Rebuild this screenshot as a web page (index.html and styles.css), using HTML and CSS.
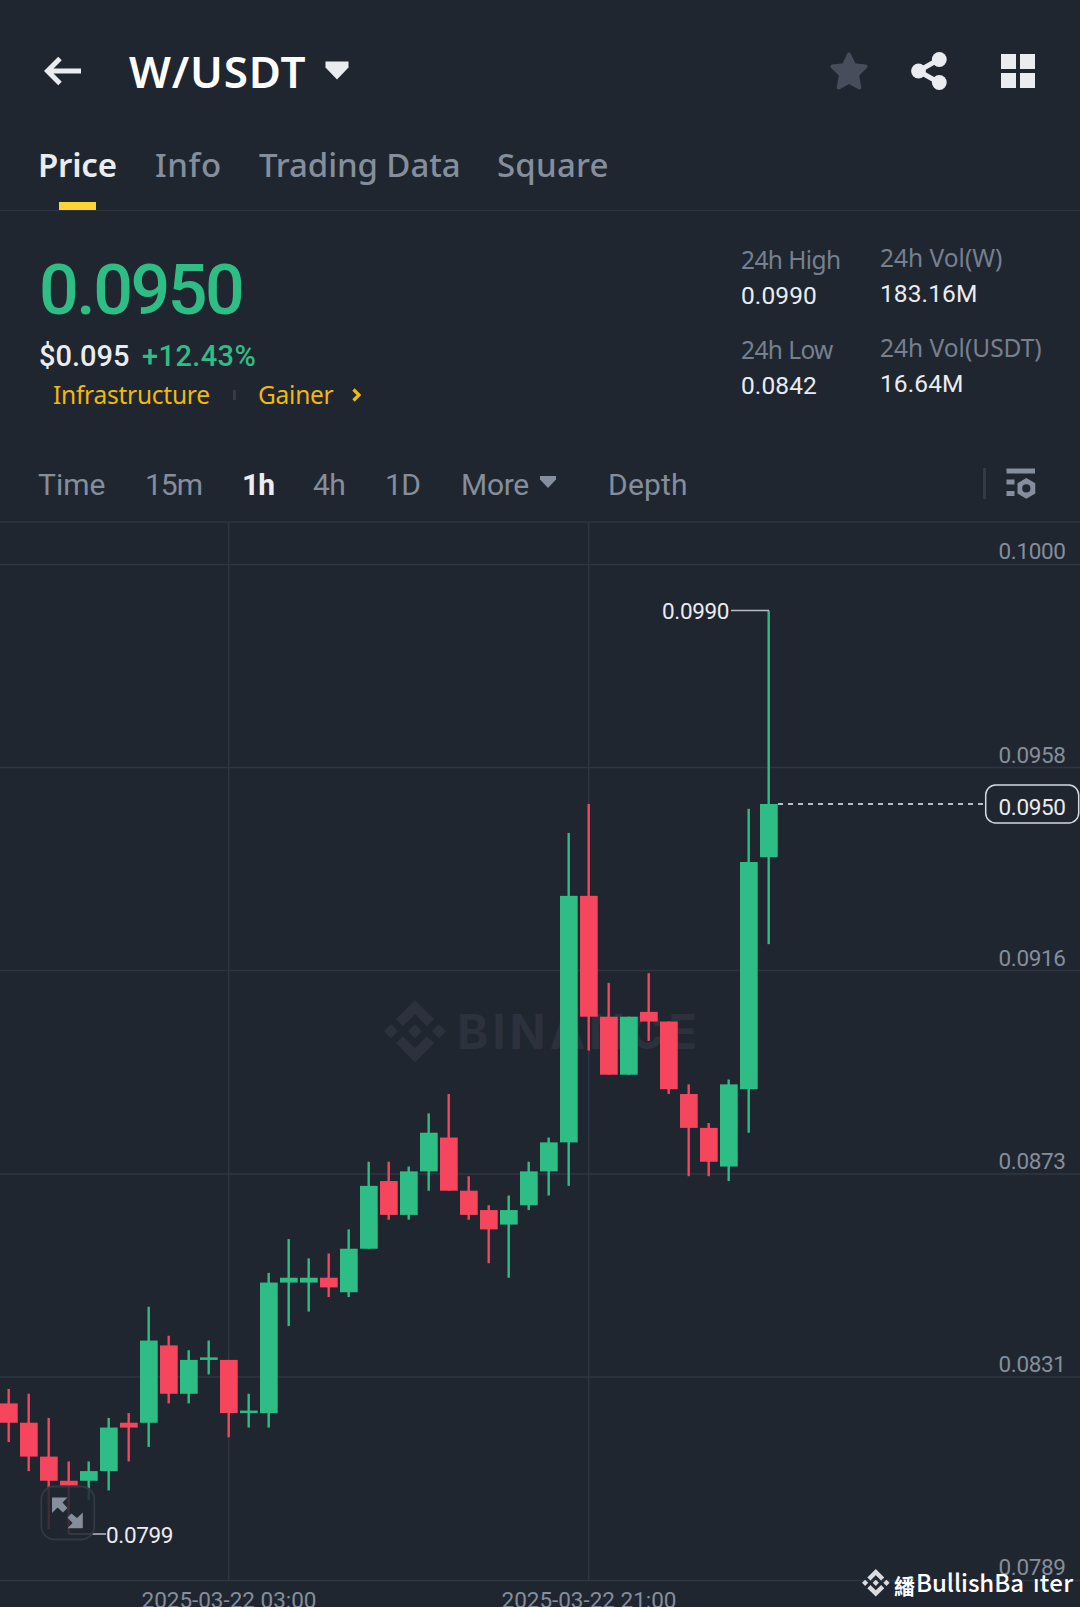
FILE: index.html
```html
<!DOCTYPE html>
<html lang="en">
<head>
    <meta charset="UTF-8">
    <meta name="viewport" content="width=device-width, initial-scale=1.0">
    <title>W/USDT</title>
    <link rel="stylesheet" href="styles.css">
</head>
<body>
    <header class="header">
        <svg class="back" viewBox="0 0 38 30" width="38" height="30">
            <path d="M37 15H4M16 2.500L3.500 15L16 27.500" fill="none" stroke="#eaecef" stroke-width="5"/>
        </svg>
        <h1 class="pair">W/USDT</h1>
        <svg class="pair-caret" viewBox="0 0 24 19" width="24" height="19">
            <path d="M0.500 0.500H23.500V6.500L12 18.500L0.500 6.500Z" fill="#eaecef"/>
        </svg>
        <div class="actions">
            <svg viewBox="0 0 38 38" width="38" height="38">
                <path d="M19 2.500L24 13.200L35.500 14.600L27 22.700L29.300 35.500L19 29.800L8.700 35.500L11 22.700L2.500 14.600L14 13.200Z" fill="#474d5b" stroke="#474d5b" stroke-width="4" stroke-linejoin="round"/>
            </svg>
            <svg class="share" viewBox="0 0 36 38" width="36" height="38">
                <path d="M28.300 7.200L7.500 19L28.300 30.800" fill="none" stroke="#eaecef" stroke-width="5"/>
                <circle cx="7.500" cy="19" r="7.400" fill="#eaecef"/>
                <circle cx="28.300" cy="7.500" r="7.400" fill="#eaecef"/>
                <circle cx="28.300" cy="30.500" r="7.400" fill="#eaecef"/>
            </svg>
            <svg class="grid" viewBox="0 0 34 34" width="34" height="34">
                <path d="M0 0H15V15H0ZM19 0H34V15H19ZM0 19H15V34H0ZM19 19H34V34H19Z" fill="#eaecef"/>
            </svg>
        </div>
    </header>

    <nav class="tabs">
        <a class="tab active">Price</a>
        <a class="tab info">Info</a>
        <a class="tab trading">Trading Data</a>
        <a class="tab square">Square</a>
    </nav>

    <section class="summary">
        <div class="quote">
            <div class="last">0.0950</div>
            <div class="sub"><span class="usd">$0.095</span><span class="change">+12.43%</span></div>
            <div class="tags">
                <span class="tag-infra">Infrastructure</span>
                <i class="sep"></i>
                <span class="tag-gainer">Gainer</span>
                <svg viewBox="0 0 10 14" width="10" height="14">
                    <path d="M1.500 1.500L7 7L1.500 12.500" fill="none" stroke="#f0b90b" stroke-width="3.200"/>
                </svg>
            </div>
        </div>
        <div class="stats">
            <dl class="stat-col price-col">
                <div><dt>24h High</dt><dd>0.0990</dd></div>
                <div><dt>24h Low</dt><dd>0.0842</dd></div>
            </dl>
            <dl class="stat-col vol-col">
                <div><dt>24h Vol(W)</dt><dd>183.16M</dd></div>
                <div><dt>24h Vol(USDT)</dt><dd>16.64M</dd></div>
            </dl>
        </div>
    </section>

    <nav class="intervals">
        <a class="w-time">Time</a>
        <a class="w-15m">15m</a>
        <a class="w-1h active">1h</a>
        <a class="w-4h">4h</a>
        <a class="w-1d">1D</a>
        <a class="w-more">More
            <svg viewBox="0 0 16 12" width="16" height="12"><path d="M0 0H16V3.500L8 12L0 3.500Z" fill="#848e9c"/></svg>
        </a>
        <a class="w-depth">Depth</a>
        <div class="settings">
            <svg viewBox="0 0 30 31" width="30" height="31">
                <path d="M0.500 0.500H29V5.500H0.500ZM0.500 11.500H8.500V16.500H0.500ZM0.500 23H8.500V28H0.500Z" fill="#848e9c"/>
                <path fill-rule="evenodd" d="M20.300 10L29.300 15.200V25.600L20.300 30.800L11.500 25.600V15.200ZM20.300 16.300A4.100 4.100 0 1 0 20.300 24.500A4.100 4.100 0 1 0 20.300 16.300Z" fill="#848e9c"/>
            </svg>
        </div>
    </nav>

    <main class="chart">
        <svg viewBox="0 523 1080 1084" width="1080" height="1084">
            <g class="grid-lines">
                <path d="M0 564.500H1080M0 767.500H1080M0 970.500H1080M0 1174H1080M0 1377H1080M0 1580.500H1080"/>
                <path d="M228.700 523V1580M588.700 523V1580"/>
            </g>

            <g fill="#2c313d">
                <path transform="translate(384 1000.300) scale(2.583)" d="M16.624 13.920l2.718 2.715-7.353 7.353-7.353-7.352 2.717-2.716 4.636 4.660 4.636-4.660zM21.261 9.284L24 12l-2.715 2.716L18.568 12zM11.989 9.285l2.716 2.691-2.716 2.717L9.272 12zM2.716 9.284L5.409 12l-2.692 2.692L0 12zM11.989.012l7.353 7.329-2.718 2.715-4.635-4.636-4.636 4.660-2.717-2.715z"/>
                <text class="brand" x="457" y="1048.500" textLength="240">BINANCE</text>
            </g>

            <g id="candles"></g>

            <path d="M731 610.500H769" stroke="#b7bdc6" stroke-width="1.500"/>
            <text class="mark" x="662" y="619" textLength="67.500">0.0990</text>

            <path d="M69 1534H106" stroke="#b7bdc6" stroke-width="1.500"/>
            <text class="mark" x="106" y="1543.300" textLength="67.500">0.0799</text>

            <path d="M778 804H984" stroke="#b7bdc6" stroke-width="1.800" stroke-dasharray="5 5"/>
            <rect x="985.700" y="785" width="93" height="38" rx="10" fill="#202630" stroke="#d5d8dd" stroke-width="1.500"/>
            <text class="mark" x="998.500" y="815.300" textLength="67.500">0.0950</text>

            <g class="axis">
                <text x="998.500" y="559.300" textLength="67.500">0.1000</text>
                <text x="998.500" y="762.500" textLength="67.500">0.0958</text>
                <text x="998.500" y="966" textLength="67.500">0.0916</text>
                <text x="998.500" y="1169" textLength="67.500">0.0873</text>
                <text x="998.500" y="1372" textLength="67.500">0.0831</text>
                <text x="998.500" y="1575" textLength="67.500">0.0789</text>
                <text x="141.500" y="1608" textLength="175">2025-03-22 03:00</text>
                <text x="501.500" y="1608" textLength="175">2025-03-22 21:00</text>
            </g>

            <!-- fullscreen toggle -->
            <rect x="41.300" y="1486.500" width="53" height="53" rx="13" fill="#202630" fill-opacity="0.840" stroke="#303a45" stroke-width="1.800"/>
            <path d="M52 1497.500H67.500L62.500 1502.500L67.500 1508L63 1512.500L57.500 1507.500L52 1513ZM82.800 1528.300H67.500L72.500 1523L67.500 1517.500L71.500 1513.500L77 1518L82.800 1512.500Z" fill="#848e9c"/>

            <!-- author stamp -->
            <path transform="translate(862 1569) scale(1.150)" fill="#d9dbdf" d="M16.624 13.920l2.718 2.715-7.353 7.353-7.353-7.352 2.717-2.716 4.636 4.660 4.636-4.660zM21.261 9.284L24 12l-2.715 2.716L18.568 12zM11.989 9.285l2.716 2.691-2.716 2.717L9.272 12zM2.716 9.284L5.409 12l-2.692 2.692L0 12zM11.989.012l7.353 7.329-2.718 2.715-4.635-4.636-4.636 4.660-2.717-2.715z"/>
            <g class="stamp">
                <text class="stamp-cjk" x="894" y="1594">繙</text>
                <text x="916" y="1591.700" textLength="108">BullishBa</text>
                <text x="1033" y="1591.700" textLength="40">ıter</text>
            </g>
        </svg>
    </main>

    <script src="chart.js"></script>
</body>
</html>
```

FILE: styles.css
```css
* {
    box-sizing: border-box;
}
body {
    margin: 0;
    width: 1080px;
    height: 1607px;
    overflow: hidden;
    background: #202630;
    color: #eaecef;
    font-family: Roboto, "Liberation Sans", sans-serif;
}
svg {
    display: block;
    flex: none;
}
.header {
    display: flex;
    align-items: center;
    height: 141px;
    padding: 0 45px 0 44px;
}
.pair {
    width: 200px;
    margin: 0 0 0 47px;
    font-family: "Noto Sans", "Open Sans", sans-serif;
    font-size: 44px;
    font-weight: 600;
    line-height: 60px;
    letter-spacing: 0.8px;
    color: #fff;
    white-space: nowrap;
}
.pair-caret {
    margin-left: -4px;
}
.actions {
    display: flex;
    align-items: center;
    margin-left: auto;
}
.share {
    margin-left: 43px;
}
.grid {
    margin-left: 54px;
}
.tabs {
    display: flex;
    height: 70px;
    padding-left: 38px;
    border-bottom: 1px solid #2e3540;
    font-family: "Noto Sans", "Open Sans", sans-serif;
    font-size: 33px;
    font-weight: 500;
    line-height: 48px;
    letter-spacing: 0.2px;
    color: #848e9c;
    white-space: nowrap;
}
.tab {
    width: 117px;
}
.tab.active {
    color: #eaecef;
    font-weight: 600;
    letter-spacing: -0.2px;
}
.tab.active::after {
    content: "";
    display: block;
    width: 37px;
    height: 8px;
    margin: 13px 0 0 21px;
    background: #fcd535;
}
.tab.info {
    width: 104px;
    letter-spacing: 0.6px;
}
.tab.trading {
    width: 238px;
    letter-spacing: -0.1px;
}
.summary {
    display: flex;
    justify-content: space-between;
    height: 238px;
    padding-left: 39px;
}
.quote {
    padding-top: 39px;
}
.last {
    font-size: 70px;
    font-weight: 500;
    line-height: 80px;
    letter-spacing: -2.5px;
    color: #2ebd85;
}
.sub {
    display: flex;
    margin-top: 8px;
    font-size: 29px;
    font-weight: 500;
    line-height: 36px;
}
.usd {
    width: 103px;
}
.change {
    letter-spacing: 0.4px;
    color: #2ebd85;
}
.tags {
    display: flex;
    align-items: center;
    margin: 5px 0 0 14px;
    font-family: "Noto Sans", "Open Sans", sans-serif;
    font-size: 24.5px;
    line-height: 32px;
    letter-spacing: -0.25px;
    color: #f0b90b;
}
.tag-infra {
    width: 180px;
}
.tag-gainer {
    width: 94px;
}
.sep {
    width: 3px;
    height: 10px;
    margin-right: 22px;
    background: #323b47;
}
.stats {
    display: flex;
    width: 339px;
}
.stat-col {
    display: flex;
    flex-direction: column;
    gap: 18px;
    margin: 0;
    padding-top: 31px;
    white-space: nowrap;
}
.price-col {
    width: 139px;
}
.price-col dt {
    letter-spacing: -0.6px;
}
.vol-col {
    padding-top: 29px;
}
.stat-col dt {
    font-family: "Noto Sans", "Open Sans", sans-serif;
    font-size: 24.5px;
    line-height: 36px;
    color: #76808f;
}
.stat-col dd {
    margin: 0;
    font-size: 24.5px;
    line-height: 36px;
    letter-spacing: 0.1px;
}
.intervals {
    display: flex;
    align-items: center;
    height: 74px;
    padding-left: 38px;
    border-bottom: 2px solid #2b313c;
    font-size: 30px;
    line-height: 40px;
    color: #848e9c;
    white-space: nowrap;
}
.intervals .active {
    color: #eaecef;
    font-weight: 700;
    letter-spacing: -1px;
}
.w-time {
    width: 107px;
}
.w-15m {
    width: 97px;
    letter-spacing: -1px;
}
.w-1h {
    width: 71px;
}
.w-4h {
    width: 72px;
    letter-spacing: -0.5px;
}
.w-1d {
    width: 76px;
    letter-spacing: -0.5px;
}
.w-more {
    display: flex;
    align-items: center;
    gap: 11px;
    width: 147px;
    letter-spacing: -0.3px;
}
.w-more svg {
    margin-top: -6px;
}
.w-depth {
    letter-spacing: 0.2px;
}
.settings {
    position: relative;
    top: -2px;
    margin: 0 44px 0 auto;
    padding-left: 20px;
    border-left: 3px solid #303b46;
}
.chart {
    height: 1084px;
}
.grid-lines path {
    fill: none;
    stroke: #2f3641;
    stroke-width: 1.5;
}
.brand {
    font-family: Inter, sans-serif;
    font-size: 47.5px;
    font-weight: 700;
}
.mark,
.axis {
    font-size: 22.5px;
}
.mark {
    fill: #eaecef;
}
.axis {
    fill: #848e9c;
}
.up {
    fill: #2ebd85;
}
.down {
    fill: #f6465d;
}
.stamp {
    font-family: "Noto Sans CJK SC", "Noto Sans", sans-serif;
    font-size: 24px;
    font-weight: 500;
    fill: #fff;
}
.stamp-cjk {
    font-size: 21px;
    font-weight: 700;
}
```

FILE: chart.js
```js
// high, body top, body bottom, low (in 0.0001 USDT), direction
const candles = [
    [829, 826, 822, 818, "down"],
    [828, 822, 815, 812, "down"],
    [823, 815, 810, 800, "down"],
    [814, 810, 809, 799, "down"],
    [814, 812, 810, 806, "up"],
    [823, 821, 812, 808, "up"],
    [824, 822, 821, 814, "down"],
    [846, 839, 822, 817, "up"],
    [840, 838, 828, 826, "down"],
    [837, 835, 828, 826, "up"],
    [839, 835, 835, 832, "up"],
    [835, 835, 824, 819, "down"],
    [828, 824, 824, 821, "up"],
    [853, 851, 824, 821, "up"],
    [860, 852, 851, 842, "up"],
    [856, 852, 851, 845, "up"],
    [857, 852, 850, 848, "down"],
    [862, 858, 849, 848, "up"],
    [876, 871, 858, 858, "up"],
    [876, 872, 865, 864, "down"],
    [875, 874, 865, 864, "up"],
    [886, 882, 874, 870, "up"],
    [890, 881, 870, 870, "down"],
    [873, 870, 865, 864, "down"],
    [867, 866, 862, 855, "down"],
    [869, 866, 863, 852, "up"],
    [876, 874, 867, 866, "up"],
    [881, 880, 874, 869, "up"],
    [944, 931, 880, 871, "up"],
    [950, 931, 906, 899, "down"],
    [913, 906, 894, 894, "down"],
    [906, 906, 894, 894, "up"],
    [915, 907, 905, 901, "down"],
    [905, 905, 891, 890, "down"],
    [892, 890, 883, 873, "down"],
    [884, 883, 876, 873, "down"],
    [893, 892, 875, 872, "up"],
    [949, 938, 891, 882, "up"],
    [990, 950, 939, 921, "up"]
];

const layer = document.getElementById("candles");
const y = p => 804 + (950 - p) * 4.834;

function bar(x, top, bottom, width, cls) {
    const r = document.createElementNS("http://www.w3.org/2000/svg", "rect");
    r.setAttribute("x", x);
    r.setAttribute("y", top);
    r.setAttribute("width", width);
    r.setAttribute("height", bottom - top);
    r.setAttribute("class", cls);
    layer.appendChild(r);
}

candles.forEach(([high, top, bottom, low, cls], i) => {
    const x = i * 20;
    bar(x + 7.5, y(high), y(low), 2.4, cls);
    // flat candles still get a thin body
    const bodyTop = top === bottom ? y(bottom) - 2.5 : y(top);
    bar(x, bodyTop, y(bottom), 17.7, cls);
});
```
